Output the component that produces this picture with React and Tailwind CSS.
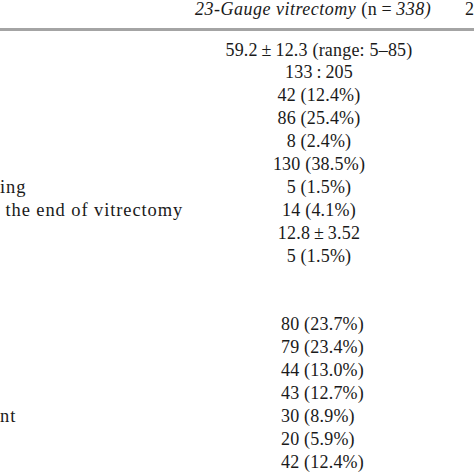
const ROWS = [
  { label: '', value: '59.2\u2009±\u200912.3 (range: 5–85)', align: 'center' },
  { label: '', value: '133\u2009:\u2009205', align: 'center' },
  { label: '', value: '42 (12.4%)', align: 'center' },
  { label: '', value: '86 (25.4%)', align: 'center' },
  { label: '', value: '8 (2.4%)', align: 'center' },
  { label: '', value: '130 (38.5%)', align: 'center' },
  { label: 'ing', value: '5 (1.5%)', align: 'center' },
  { label: '\u00a0the end of vitrectomy', value: '14 (4.1%)', align: 'center' },
  { label: '', value: '12.8\u2009±\u20093.52', align: 'center' },
  { label: '', value: '5 (1.5%)', align: 'center' },
  { label: '', value: '', align: 'center' },
  { label: '', value: '', align: 'center' },
  { label: '', value: '80 (23.7%)', align: 'left' },
  { label: '', value: '79 (23.4%)', align: 'left' },
  { label: '', value: '44 (13.0%)', align: 'left' },
  { label: '', value: '43 (12.7%)', align: 'left' },
  { label: 'nt', value: '30 (8.9%)', align: 'left' },
  { label: '', value: '20 (5.9%)', align: 'left' },
  { label: '', value: '42 (12.4%)', align: 'left' },
];

export default function App() {
  return (
    <div className="w-[474px] h-[474px] overflow-hidden bg-white text-[#1a1a1a] text-[18px] font-['Liberation_Serif',serif] whitespace-nowrap">
      {/* column header */}
      <div className="flex justify-between h-[19px] leading-[19px] pl-[195px]">
        <span className="tracking-[0.5px]">
          <i>23-Gauge vitrectomy</i> (n{'\u2009'}={'\u2009'}<i>338)</i>
        </span>
        <span>2</span>
      </div>

      <div className="mt-[9px] h-[3px] bg-[#a4a4a4]" />

      {/* body */}
      <div className="mt-[7.5px]">
        {ROWS.map((r, i) => (
          <div key={i} className="flex h-[22.9px] leading-[22.9px]">
            <div className="w-[216px] shrink-0 text-[18.5px] tracking-[0.9px]">{r.label}</div>
            <div
              className={
                r.align === 'center'
                  ? 'w-[206px] shrink-0 text-center tracking-[0.2px]'
                  : 'w-[206px] shrink-0 pl-[65px] tracking-[0.2px]'
              }
            >
              {r.value}
            </div>
          </div>
        ))}
      </div>
    </div>
  );
}
